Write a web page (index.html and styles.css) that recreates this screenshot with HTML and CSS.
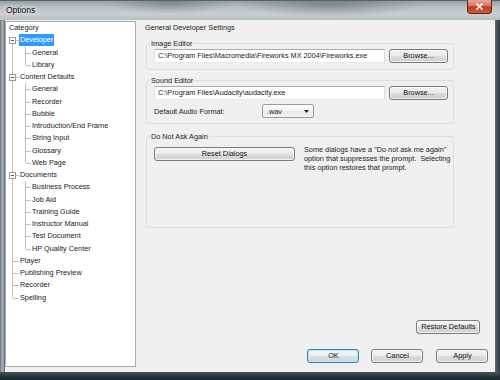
FILE: index.html
```html
<!DOCTYPE html>
<html>
<head>
<meta charset="utf-8">
<link rel="stylesheet" href="styles.css">
</head>
<body>
<div class="window">
  <div class="titlebar">
    <span class="title">Options</span>
    <span class="close"><svg width="9" height="7" viewBox="0 0 9 7"><path d="M1.5 0.5 L7.5 6.5 M7.5 0.5 L1.5 6.5" stroke="#fff" stroke-width="1.6" fill="none"/></svg></span>
  </div>
  <div class="frame">
    <div class="client">
      <div class="tree">
        <div class="tree-head">Category</div>
        <ul class="tree-root">
          <li class="top"><span class="toggle"></span><div class="row"><span class="label selected">Developer</span></div>
            <ul class="kids">
              <li><div class="row"><span class="label">General</span></div></li>
              <li><div class="row"><span class="label">Library</span></div></li>
            </ul>
          </li>
          <li class="top"><span class="toggle"></span><div class="row"><span class="label">Content Defaults</span></div>
            <ul class="kids">
              <li><div class="row"><span class="label">General</span></div></li>
              <li><div class="row"><span class="label">Recorder</span></div></li>
              <li><div class="row"><span class="label">Bubble</span></div></li>
              <li><div class="row"><span class="label">Introduction/End Frame</span></div></li>
              <li><div class="row"><span class="label">String Input</span></div></li>
              <li><div class="row"><span class="label">Glossary</span></div></li>
              <li><div class="row"><span class="label">Web Page</span></div></li>
            </ul>
          </li>
          <li class="top"><span class="toggle"></span><div class="row"><span class="label">Documents</span></div>
            <ul class="kids">
              <li><div class="row"><span class="label">Business Process</span></div></li>
              <li><div class="row"><span class="label">Job Aid</span></div></li>
              <li><div class="row"><span class="label">Training Guide</span></div></li>
              <li><div class="row"><span class="label">Instructor Manual</span></div></li>
              <li><div class="row"><span class="label">Test Document</span></div></li>
              <li><div class="row"><span class="label">HP Quality Center</span></div></li>
            </ul>
          </li>
          <li class="top"><div class="row"><span class="label">Player</span></div></li>
          <li class="top"><div class="row"><span class="label">Publishing Preview</span></div></li>
          <li class="top"><div class="row"><span class="label">Recorder</span></div></li>
          <li class="top"><div class="row"><span class="label">Spelling</span></div></li>
        </ul>
      </div>
      <div class="pane">
        <div class="pane-title">General Developer Settings</div>
        <fieldset class="group g1">
          <legend>Image Editor</legend>
          <div class="path-row">
            <div class="textbox">C:\Program Files\Macromedia\Fireworks MX 2004\Fireworks.exe</div>
            <button class="btn browse">Browse...</button>
          </div>
        </fieldset>
        <fieldset class="group g2">
          <legend>Sound Editor</legend>
          <div class="path-row">
            <div class="textbox">C:\Program Files\Audacity\audacity.exe</div>
            <button class="btn browse">Browse...</button>
          </div>
          <div class="format-row">
            <span class="format-label">Default Audio Format:</span>
            <div class="combo"><span>.wav</span><svg width="5" height="3" viewBox="0 0 5 3"><path d="M0 0 H5 L2.5 3 Z" fill="#222"/></svg></div>
          </div>
        </fieldset>
        <fieldset class="group g3">
          <legend>Do Not Ask Again</legend>
          <div class="dna-row">
            <button class="btn reset">Reset Dialogs</button>
            <p class="dna-text">Some dialogs have a &quot;Do not ask me again&quot;<br>option that suppresses the prompt.&nbsp; Selecting<br>this option restores that prompt.</p>
          </div>
        </fieldset>
        <div class="spacer"></div>
        <button class="btn restore">Restore Defaults</button>
        <div class="actions">
          <button class="btn default">OK</button>
          <button class="btn">Cancel</button>
          <button class="btn apply">Apply</button>
        </div>
      </div>
    </div>
  </div>
</div>
</body>
</html>
```

FILE: styles.css
```css
* { box-sizing: border-box; }
html, body { margin: 0; padding: 0; }
body {
  width: 500px;
  height: 380px;
  overflow: hidden;
  font-family: "Liberation Sans", Arial, sans-serif;
  font-size: 7.3px;
  color: #222;
  background: #2b383e;
}
.window {
  width: 500px;
  height: 380px;
  display: flex;
  flex-direction: column;
}
.titlebar {
  height: 20px;
  flex: none;
  display: flex;
  align-items: flex-start;
  background:
    radial-gradient(ellipse 60px 10px at 170px 3px, rgba(60,75,85,0.35), rgba(60,75,85,0) 100%),
    radial-gradient(ellipse 90px 12px at 330px 4px, rgba(55,70,85,0.4), rgba(55,70,85,0) 100%),
    linear-gradient(180deg, #949fa4 0%, #bcc3c7 35%, #c8ced1 70%, #b8c0c4 100%);
  border-top: 1px solid #56626a;
}
.title {
  padding-left: 6px;
  line-height: 19px;
  font-size: 8.5px;
  color: #000;
  text-shadow: 0 0 4px rgba(255,255,255,0.9), 0 0 2px rgba(255,255,255,0.9);
}
.close {
  margin-left: auto;
  margin-right: 8px;
  width: 25px;
  height: 14px;
  margin-top: -1px;
  border: 1px solid #6a2418;
  border-top: none;
  border-radius: 0 0 4px 4px;
  background: linear-gradient(180deg, #e7a898 0%, #d87662 45%, #c03a22 52%, #d35a40 100%);
  display: flex;
  align-items: center;
  justify-content: center;
}
.frame {
  flex: 1;
  display: flex;
  padding: 0 7px 8px 5px;
  background:
    linear-gradient(180deg, #44525a 0%, #26333a 60%, #1c272c 100%) bottom / 100% 8px no-repeat,
    linear-gradient(90deg, #626c70 0, #aab2b5 2px, #8e979b 4px, #4e595e 5px, #4e595e 493px, #66737a 495px, #43525a 497px, #2f3c42 500px);
}
.client {
  flex: 1;
  display: flex;
  background: #f0f0f0;
}
/* tree */
.tree {
  width: 131px;
  flex: none;
  margin: 1px 0 5px 0;
  background: #fff;
  border: 1px solid #a7adb3;
  padding: 0.5px 0 0 0;
}
.tree-head {
  height: 11.9px;
  line-height: 9px;
  padding-left: 3px;
}
.tree-root, .kids {
  list-style: none;
  margin: 0;
  padding: 0;
}
.tree-root li {
  position: relative;
}
.row {
  height: 12.25px;
  line-height: 12.25px;
  white-space: nowrap;
}
.top > .row { padding-left: 13px; }
.kids .row { padding-left: 25px; }
.label {
  display: inline-block;
  padding: 0 1px;
  height: 12px;
  line-height: 12px;
}
.label.selected {
  background: #3399ff;
  color: #fff;
}
.top::before {
  content: "";
  position: absolute;
  left: 6px;
  top: 0;
  bottom: 0;
  border-left: 1px solid #c2c2c2;
}
.top:first-child::before { top: 6px; }
.top:last-child::before { bottom: auto; height: 6px; }
.top::after {
  content: "";
  position: absolute;
  left: 7px;
  top: 6px;
  width: 6px;
  border-top: 1px solid #c2c2c2;
}
.kids li::before {
  content: "";
  position: absolute;
  left: 19px;
  top: 0;
  bottom: 0;
  border-left: 1px solid #c2c2c2;
}
.kids li:last-child::before { bottom: auto; height: 6px; }
.kids li::after {
  content: "";
  position: absolute;
  left: 20px;
  top: 6px;
  width: 5px;
  border-top: 1px solid #c2c2c2;
}
.toggle {
  position: absolute;
  left: 3px;
  top: 3px;
  width: 7px;
  height: 7px;
  border: 1px solid #9a9a9a;
  background: #fff;
  z-index: 1;
}
.toggle::before {
  content: "";
  position: absolute;
  left: 1px;
  top: 2px;
  width: 3px;
  height: 1px;
  background: #555;
}
/* right pane */
.pane {
  flex: 1;
  display: flex;
  flex-direction: column;
  padding: 2.5px 7px 9px 9px;
}
.pane-title {
  line-height: 9px;
}
.group {
  margin: 0 34px 0 1px;
  min-width: 0;
  border: 1px solid #dcdfe1;
  border-radius: 3px;
  padding: 1.5px 3px 6px 7px;
}
.group legend {
  padding: 0 1px;
  margin-left: -4px;
  line-height: 9px;
}
.g1 { margin-top: 7px; }
.g2 { margin-top: 5.5px; padding-bottom: 5px; }
.g3 { margin-top: 7.5px; padding-top: 4px; padding-bottom: 55px; }
.path-row {
  display: flex;
  gap: 4px;
  height: 14px;
}
.textbox {
  width: 231px;
  flex: none;
  height: 14px;
  background: #fff;
  border: 1px solid;
  border-color: #abadb3 #dbdfe6 #e3e9ef #e2e3ea;
  padding-left: 3px;
  line-height: 12px;
  white-space: nowrap;
  overflow: hidden;
}
.btn {
  font-family: inherit;
  font-size: 7.3px;
  color: #111;
  padding: 0;
  height: 14px;
  line-height: 12px;
  border: 1px solid #7a7a7a;
  border-radius: 3px;
  background: linear-gradient(180deg, #f2f2f2 0%, #ebebeb 50%, #dddddd 51%, #cfcfcf 100%);
  box-shadow: inset 0 0 0 1px rgba(255,255,255,0.7);
  flex: none;
}
.browse { width: 59px; }
.format-row {
  display: flex;
  align-items: center;
  margin-top: 4px;
  height: 14px;
}
.format-label {
  width: 108px;
  flex: none;
}
.combo {
  width: 52px;
  height: 14px;
  border: 1px solid #9a9a9a;
  border-radius: 2px;
  background: linear-gradient(180deg, #fdfdfd 0%, #f4f4f4 50%, #ebebeb 51%, #f2f2f2 100%);
  display: flex;
  align-items: center;
  justify-content: space-between;
  padding: 0 4px 0 4px;
}
.dna-row {
  display: flex;
  align-items: flex-start;
}
.reset {
  width: 141px;
  margin-top: 2.5px;
}
.dna-text {
  margin: 0 0 0 9px;
  line-height: 9px;
  white-space: nowrap;
}
.spacer { flex: 1; }
.restore {
  align-self: flex-end;
  width: 64px;
  margin-right: 8px;
  margin-bottom: 15px;
}
.actions {
  display: flex;
  justify-content: flex-end;
  gap: 12px;
}
.actions .btn { width: 52px; }
.actions .apply { margin-left: 1px; }
.btn.default {
  border-color: #3c7fb1;
  box-shadow: inset 0 0 0 1px #b6e6f8;
  background: linear-gradient(180deg, #f4f8fa 0%, #e9eff2 50%, #d9e1e5 51%, #ccd6db 100%);
}
```
